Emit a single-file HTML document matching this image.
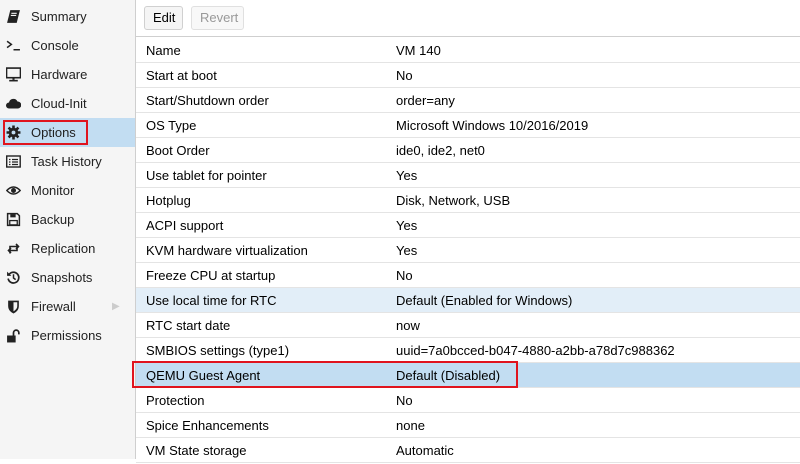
<!DOCTYPE html>
<html><head><meta charset="utf-8"><style>
*{box-sizing:border-box;margin:0;padding:0}
body{width:800px;height:459px;overflow:hidden;background:#fff;font-family:"Liberation Sans",Arial,sans-serif;font-size:13px;color:#000;position:relative}
#side{position:absolute;left:0;top:0;width:136px;height:459px;background:#f5f5f5;border-right:1px solid #cfcfcf}
.it{position:absolute;left:0;width:135px;height:29px;line-height:29px;padding-left:31px;color:#222}
.it svg{position:absolute;left:6px;top:7px;width:15px;height:15px}
.sel{background:#c2ddf2}
.red{position:absolute;border:2px solid #e0141e}
#tb{position:absolute;left:136px;top:0;right:0;height:37px;border-bottom:1px solid #cfcfcf}
.btn{position:absolute;top:6px;height:24px;line-height:22px;border:1px solid #d0d0d0;border-radius:3px;background:#f5f5f5;padding:0 8px}
.row{position:absolute;left:136px;right:0;height:25px;line-height:26px;border-bottom:1px solid #e4e4e4}
.row span{position:absolute;left:10px}
.row b{font-weight:normal;position:absolute;left:260px}
.hov{background:#e2eef8}
.rs{background:#c2ddf2}
</style></head><body>
<div id="side">
<div class="it" style="top:2px"><svg viewBox="0 0 14 14"><path d="M4 1h9l-3 12H1z" fill="#222"/><path d="M5 4h5M4.5 6h5" stroke="#f5f5f5" stroke-width="1"/></svg>Summary</div>
<div class="it" style="top:31px"><svg viewBox="0 0 14 14"><path d="M1 3l4 3-4 3M7 11h6" stroke="#222" stroke-width="1.4" fill="none"/></svg>Console</div>
<div class="it" style="top:60px"><svg viewBox="0 0 14 14"><rect x="0.5" y="1" width="13" height="9" fill="none" stroke="#222" stroke-width="1.5"/><rect x="6" y="10" width="2" height="2" fill="#222"/><rect x="3" y="12" width="8" height="1.5" fill="#222"/></svg>Hardware</div>
<div class="it" style="top:89px"><svg viewBox="0 0 15 14"><path d="M3 12a3 3 0 010-6 4.5 4.5 0 018.5-1A3.5 3.5 0 0112 12z" fill="#222"/></svg>Cloud-Init</div>
<div class="it sel" style="top:118px"><svg viewBox="0 0 14 14"><circle cx="7" cy="7" r="4.5" fill="#222"/><path d="M7 0.5v13M0.5 7h13M2.4 2.4l9.2 9.2M11.6 2.4l-9.2 9.2" stroke="#222" stroke-width="2.4"/><circle cx="7" cy="7" r="1.8" fill="#c2ddf2"/></svg>Options</div>
<div class="it" style="top:147px"><svg viewBox="0 0 15 14"><rect x="0.7" y="1.5" width="13.5" height="11" fill="none" stroke="#222" stroke-width="1.4"/><path d="M3 5h1.5M6 5h6M3 7.5h1.5M6 7.5h6M3 10h1.5M6 10h6" stroke="#222" stroke-width="1.2"/></svg>Task History</div>
<div class="it" style="top:176px"><svg viewBox="0 0 15 14"><path d="M0.8 7Q7.5 0 14.2 7Q7.5 14 0.8 7z" fill="none" stroke="#222" stroke-width="1.4"/><circle cx="7.5" cy="7" r="2.5" fill="#222"/></svg>Monitor</div>
<div class="it" style="top:205px"><svg viewBox="0 0 14 14"><path d="M1.5 1.5h9l2 2v9h-11z" fill="none" stroke="#222" stroke-width="1.4"/><rect x="4" y="2" width="5" height="3" fill="#222"/><rect x="3.5" y="8" width="7" height="4" fill="none" stroke="#222" stroke-width="1.2"/></svg>Backup</div>
<div class="it" style="top:234px"><svg viewBox="0 0 15 14"><path d="M4 12V5h8M10 2.5l2.5 2.5L10 7.5M11 3v6H3M5 6.5L2.5 9 5 11.5" fill="none" stroke="#222" stroke-width="1.6"/></svg>Replication</div>
<div class="it" style="top:263px"><svg viewBox="0 0 14 14"><path d="M3 4a5 5 0 11-1 4" fill="none" stroke="#222" stroke-width="1.6"/><path d="M1 1.5v4h4z" fill="#222"/><path d="M7 4v3.5l2 1.5" fill="none" stroke="#222" stroke-width="1.4"/></svg>Snapshots</div>
<div class="it" style="top:292px"><svg viewBox="0 0 14 14"><path d="M2 1.5h10v5c0 4-3 6-5 7-2-1-5-3-5-7z" fill="#222"/><path d="M7 3h3.5v3.5c0 2.5-2 4-3.5 5z" fill="#f5f5f5"/></svg>Firewall<span style="position:absolute;left:112px;top:0;color:#ccc;font-size:10px">&#9654;</span></div>
<div class="it" style="top:321px"><svg viewBox="0 0 14 14"><rect x="1" y="7" width="8" height="6.5" fill="#222"/><path d="M7 7V4.5a2.5 2.5 0 015 0V6" fill="none" stroke="#222" stroke-width="1.6"/></svg>Permissions</div>
<div class="red" style="left:3px;top:120px;width:85px;height:25px"></div>
</div>
<div id="tb"><div class="btn" style="left:8px;width:39px">Edit</div><div class="btn" style="left:55px;width:53px;color:#999;background:#f8f8f8;border-color:#e0e0e0">Revert</div></div>
<div class="row" style="top:38px"><span>Name</span><b>VM 140</b></div>
<div class="row" style="top:63px"><span>Start at boot</span><b>No</b></div>
<div class="row" style="top:88px"><span>Start/Shutdown order</span><b>order=any</b></div>
<div class="row" style="top:113px"><span>OS Type</span><b>Microsoft Windows 10/2016/2019</b></div>
<div class="row" style="top:138px"><span>Boot Order</span><b>ide0, ide2, net0</b></div>
<div class="row" style="top:163px"><span>Use tablet for pointer</span><b>Yes</b></div>
<div class="row" style="top:188px"><span>Hotplug</span><b>Disk, Network, USB</b></div>
<div class="row" style="top:213px"><span>ACPI support</span><b>Yes</b></div>
<div class="row" style="top:238px"><span>KVM hardware virtualization</span><b>Yes</b></div>
<div class="row" style="top:263px"><span>Freeze CPU at startup</span><b>No</b></div>
<div class="row hov" style="top:288px"><span>Use local time for RTC</span><b>Default (Enabled for Windows)</b></div>
<div class="row" style="top:313px"><span>RTC start date</span><b>now</b></div>
<div class="row" style="top:338px"><span>SMBIOS settings (type1)</span><b>uuid=7a0bcced-b047-4880-a2bb-a78d7c988362</b></div>
<div class="row rs" style="top:363px"><span>QEMU Guest Agent</span><b>Default (Disabled)</b></div>
<div class="row" style="top:388px"><span>Protection</span><b>No</b></div>
<div class="row" style="top:413px"><span>Spice Enhancements</span><b>none</b></div>
<div class="row" style="top:438px"><span>VM State storage</span><b>Automatic</b></div>
<div class="red" style="left:132px;top:361px;width:386px;height:27px"></div>
</body></html>
